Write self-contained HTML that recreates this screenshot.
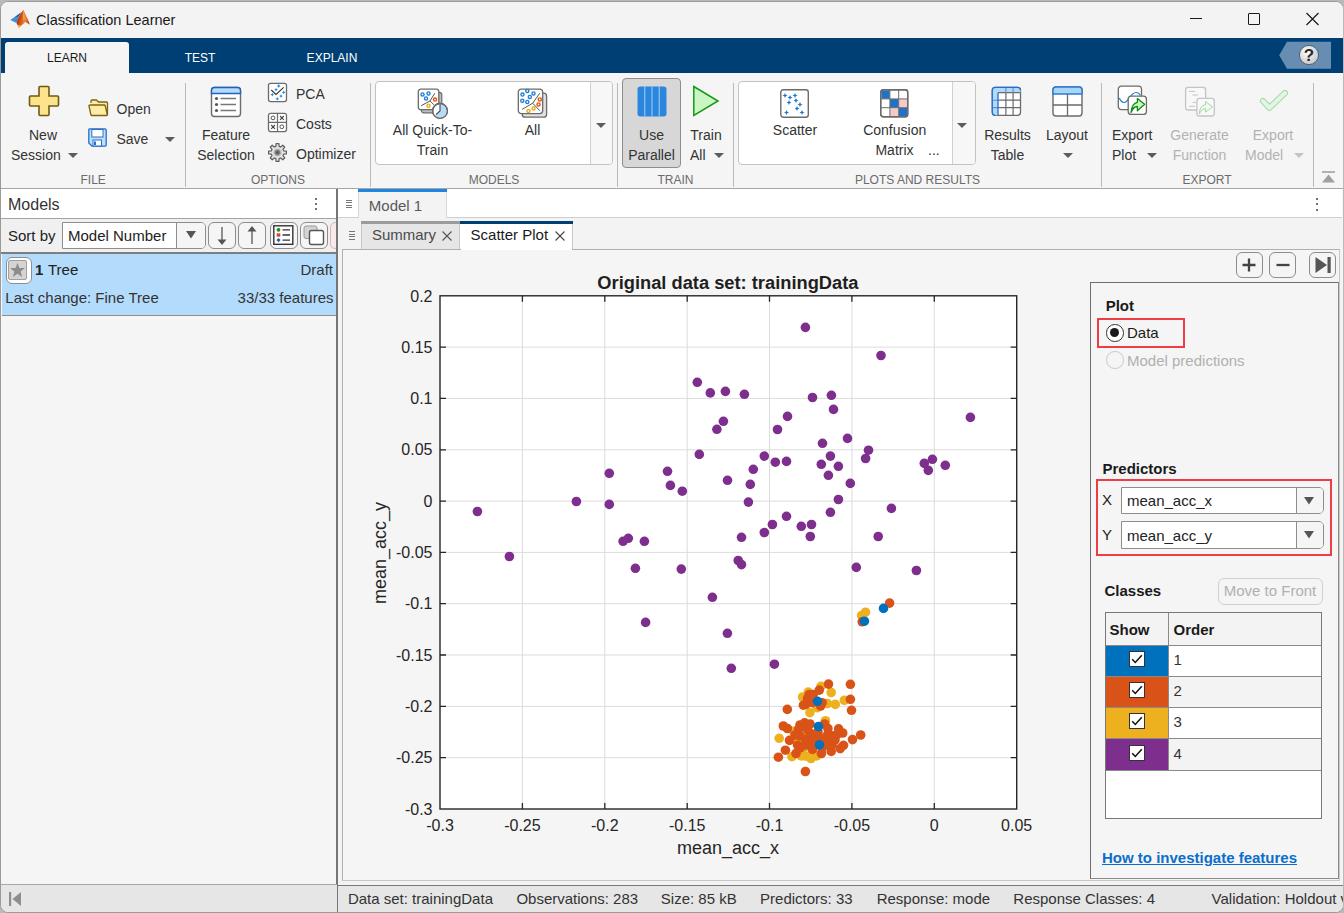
<!DOCTYPE html>
<html><head><meta charset="utf-8"><title>Classification Learner</title>
<style>
*{box-sizing:border-box;margin:0;padding:0}
html,body{width:1344px;height:913px;overflow:hidden}
body{position:relative;font-family:"Liberation Sans",sans-serif;color:#222;background:#7a6a5a}
.a{position:absolute}
.t{position:absolute;white-space:nowrap;line-height:1}
svg{position:absolute;overflow:visible}
</style></head><body>
<div class="a" style="left:0px;top:0px;width:1344px;height:913px;background:#b9b9b9"></div>
<div class="a" style="left:0px;top:1px;width:1344px;height:912px;background:#f5f5f5;border:1px solid #9a9a9a;border-radius:8px"></div>
<div class="a" style="left:1px;top:2px;width:1342px;height:36px;background:#f3f3f3;border-radius:7px 7px 0 0"></div>
<div class="t" style="top:12.7px;font-size:14.5px;left:36.0px;color:#1a1a1a">Classification Learner</div>
<svg style="left:0;top:0" width="40" height="35" viewBox="0 0 40 35">
<defs><linearGradient id="mlo" x1="0" y1="0" x2="1" y2="0.3"><stop offset="0" stop-color="#8c1d12"/><stop offset="0.45" stop-color="#d4521c"/><stop offset="0.75" stop-color="#f08a3a"/><stop offset="1" stop-color="#c8401a"/></linearGradient></defs>
<path d="M10.3 20.1 L16 16 L21 12.5 L17.5 19 L16.5 23.1 Z" fill="#3d8fdc"/>
<path d="M15 17 L21 12.5 L18.5 16.5 Z" fill="#2a5a8a"/>
<path d="M23.4 9.9 L27 17.5 L30 24.7 L25.4 22.1 L18.8 27.7 L16.5 23.1 L17.5 19 L21 13 Z" fill="url(#mlo)"/>
<path d="M23.4 9.9 L24.6 14 L24.8 19 L23.3 21 L22.8 15 Z" fill="#f7b23c" opacity="0.8"/>
<path d="M17.8 25.2 L20.3 24.9 L19.6 27.9 L18.6 27.5 Z" fill="#f5c230"/>
</svg>
<div class="a" style="left:1190px;top:18px;width:12px;height:1px;background:#1a1a1a"></div>
<div class="a" style="left:1248px;top:13px;width:12px;height:12px;border:1px solid #1a1a1a;border-radius:1px"></div>
<svg style="left:1306px;top:13px" width="13" height="12" viewBox="0 0 13 12"><path d="M0.5 0 L12.5 12 M12.5 0 L0.5 12" stroke="#1a1a1a" stroke-width="1.2"/></svg>
<div class="a" style="left:1px;top:38px;width:1342px;height:35px;background:#003f73"></div>
<div class="a" style="left:5px;top:42px;width:124px;height:31px;background:#f5f5f5;border-radius:3px 3px 0 0"></div>
<div class="t" style="top:50.6px;font-size:13.5px;left:7.0px;width:120px;text-align:center;color:#1b1b1b;transform:scaleX(0.89)">LEARN</div>
<div class="t" style="top:50.6px;font-size:13.5px;left:140.0px;width:120px;text-align:center;color:#fff;transform:scaleX(0.89)">TEST</div>
<div class="t" style="top:50.6px;font-size:13.5px;left:272.0px;width:120px;text-align:center;color:#fff;transform:scaleX(0.89)">EXPLAIN</div>
<div class="a" style="left:1px;top:73px;width:1342px;height:115px;background:#f5f5f5"></div>
<div class="a" style="left:1px;top:188px;width:1342px;height:1px;background:#a6a6a6"></div>
<div class="a" style="left:185px;top:83px;width:1.3px;height:104px;background:#b9b9b9"></div>
<div class="a" style="left:370px;top:83px;width:1.3px;height:104px;background:#b9b9b9"></div>
<div class="a" style="left:617px;top:83px;width:1.3px;height:104px;background:#b9b9b9"></div>
<div class="a" style="left:733px;top:83px;width:1.3px;height:104px;background:#b9b9b9"></div>
<div class="a" style="left:1101px;top:83px;width:1.3px;height:104px;background:#b9b9b9"></div>
<div class="a" style="left:1313px;top:83px;width:1.3px;height:104px;background:#b9b9b9"></div>
<div class="t" style="top:174.2px;font-size:12px;left:-6.8px;width:200px;text-align:center;color:#6b6b6b">FILE</div>
<div class="t" style="top:174.2px;font-size:12px;left:178.0px;width:200px;text-align:center;color:#6b6b6b">OPTIONS</div>
<div class="t" style="top:174.2px;font-size:12px;left:394.0px;width:200px;text-align:center;color:#6b6b6b">MODELS</div>
<div class="t" style="top:174.2px;font-size:12px;left:575.5px;width:200px;text-align:center;color:#6b6b6b">TRAIN</div>
<div class="t" style="top:174.2px;font-size:12px;left:817.5px;width:200px;text-align:center;color:#6b6b6b">PLOTS AND RESULTS</div>
<div class="t" style="top:174.2px;font-size:12px;left:1107.0px;width:200px;text-align:center;color:#6b6b6b">EXPORT</div>
<svg style="left:28px;top:85px" width="32" height="32" viewBox="0 0 32 32">
<path d="M12 1.5 H20 Q21 1.5 21 2.5 V11 H29.5 Q30.5 11 30.5 12 V20 Q30.5 21 29.5 21 H21 V29.5 Q21 30.5 20 30.5 H12 Q11 30.5 11 29.5 V21 H2.5 Q1.5 21 1.5 20 V12 Q1.5 11 2.5 11 H11 V2.5 Q11 1.5 12 1.5 Z" fill="#fce48c" stroke="#6e5a12" stroke-width="1.6"/>
</svg>
<div class="t" style="top:127.8px;font-size:14px;left:-7.0px;width:100px;text-align:center;color:#333">New</div>
<div class="t" style="top:147.6px;font-size:14px;left:11.0px;color:#333">Session</div>
<svg style="left:68px;top:153px" width="10" height="5" viewBox="0 0 10 5"><path d="M0 0 L10 0 L5.0 5 Z" fill="#5c5c5c"/></svg>
<svg style="left:88px;top:99px" width="21" height="18" viewBox="0 0 21 18">
<path d="M3 4 V2 Q3 1 4 1 H8.5 L10.5 3 H18.5 Q19.5 3 19.5 4 V15.5 Q19.5 16.5 18.5 16.5 H4 Q3 16.5 2.8 15.5 L1 7 Q0.8 6 2 6 H16 Q17 6 17.3 7 L19.3 16" fill="#fdeba6" stroke="#7a6414" stroke-width="1.3" stroke-linejoin="round"/>
</svg>
<div class="t" style="top:102.1px;font-size:14px;left:116.5px;color:#333">Open</div>
<svg style="left:88px;top:128px" width="19" height="19" viewBox="0 0 19 19">
<path d="M1.5 0.8 H17 Q18.2 0.8 18.2 2 V17 Q18.2 18.2 17 18.2 H4 L0.8 15 V2 Q0.8 0.8 1.5 0.8 Z" fill="#bfe0fb" stroke="#2a6fc4" stroke-width="1.3"/>
<rect x="3.8" y="1.5" width="11.2" height="7.5" fill="#fff" stroke="#2a6fc4" stroke-width="1"/>
<rect x="5" y="12" width="8.5" height="6" fill="#fff" stroke="#2a6fc4" stroke-width="1"/>
<rect x="6" y="13.5" width="2" height="3.5" fill="#2a6fc4"/>
</svg>
<div class="t" style="top:131.9px;font-size:14px;left:116.5px;color:#333">Save</div>
<svg style="left:165px;top:137px" width="10" height="5" viewBox="0 0 10 5"><path d="M0 0 L10 0 L5.0 5 Z" fill="#5c5c5c"/></svg>
<svg style="left:210px;top:86px" width="32" height="32" viewBox="0 0 32 32">
<rect x="1.5" y="1.5" width="29" height="29" rx="3" fill="#fff" stroke="#6b6b6b" stroke-width="1.4"/>
<path d="M1.5 7.5 V4.5 Q1.5 1.5 4.5 1.5 H27.5 Q30.5 1.5 30.5 4.5 V7.5 Z" fill="#b3dcfc" stroke="#2262b8" stroke-width="1.4"/>
<circle cx="6.5" cy="12.5" r="1.6" fill="#555"/><circle cx="6.5" cy="18.5" r="1.6" fill="#555"/><circle cx="6.5" cy="24.5" r="1.6" fill="#555"/>
<path d="M10.5 12.5 H26 M10.5 18.5 H26 M10.5 24.5 H26" stroke="#777" stroke-width="1.4"/>
</svg>
<div class="t" style="top:128.1px;font-size:14px;left:176.0px;width:100px;text-align:center;color:#333">Feature</div>
<div class="t" style="top:147.9px;font-size:14px;left:176.0px;width:100px;text-align:center;color:#333">Selection</div>
<svg style="left:265px;top:80px" width="25" height="25" viewBox="265 80 25 25">
<rect x="268.5" y="83.3" width="18" height="18.3" rx="2" fill="#fff" stroke="#6b6b6b" stroke-width="1.3"/>
<g fill="#2c8ae0"><path d="M278.7 84.1 L279.365 85.335 L280.59999999999997 86 L279.365 86.665 L278.7 87.9 L278.03499999999997 86.665 L276.8 86 L278.03499999999997 85.335 Z"/><path d="M276 87.8 L276.665 89.035 L277.9 89.7 L276.665 90.36500000000001 L276 91.60000000000001 L275.335 90.36500000000001 L274.1 89.7 L275.335 89.035 Z"/><path d="M283.7 90.5 L284.365 91.735 L285.59999999999997 92.4 L284.365 93.06500000000001 L283.7 94.30000000000001 L283.03499999999997 93.06500000000001 L281.8 92.4 L283.03499999999997 91.735 Z"/><path d="M272.3 92.8 L272.96500000000003 94.035 L274.2 94.7 L272.96500000000003 95.36500000000001 L272.3 96.60000000000001 L271.635 95.36500000000001 L270.40000000000003 94.7 L271.635 94.035 Z"/><path d="M281 94.19999999999999 L281.665 95.43499999999999 L282.9 96.1 L281.665 96.765 L281 98.0 L280.335 96.765 L279.1 96.1 L280.335 95.43499999999999 Z"/><path d="M277.3 96.89999999999999 L277.96500000000003 98.13499999999999 L279.2 98.8 L277.96500000000003 99.465 L277.3 100.7 L276.635 99.465 L275.40000000000003 98.8 L276.635 98.13499999999999 Z"/></g>
<path d="M271.3 90 L276 94.4 L283.7 87.4" fill="none" stroke="#333" stroke-width="1.1"/>
</svg>
<div class="t" style="top:87.1px;font-size:14px;left:296.0px;color:#333">PCA</div>
<svg style="left:267px;top:112px" width="21" height="21" viewBox="0 0 21 21">
<rect x="1.5" y="1.3" width="18" height="18.3" rx="2" fill="#fff" stroke="#6b6b6b" stroke-width="1.3"/>
<path d="M10.5 1.3 V19.6 M1.5 10.4 H19.5" stroke="#6b6b6b" stroke-width="1.2"/>
<circle cx="6" cy="5.9" r="1.9" fill="none" stroke="#555" stroke-width="1"/><circle cx="14.8" cy="14.8" r="1.9" fill="none" stroke="#555" stroke-width="1"/>
<path d="M13 4 L16.8 7.8 M16.8 4 L13 7.8 M4.2 13 L8 16.8 M8 13 L4.2 16.8" stroke="#444" stroke-width="1.1"/>
</svg>
<div class="t" style="top:116.8px;font-size:14px;left:296.0px;color:#333">Costs</div>
<svg style="left:267px;top:142px" width="21" height="21" viewBox="0 0 21 21">
<defs><radialGradient id="gg"><stop offset="0" stop-color="#505050"/><stop offset="0.4" stop-color="#707070"/><stop offset="0.7" stop-color="#a8a8a8"/><stop offset="1" stop-color="#d8d8d8"/></radialGradient></defs>
<path d="M8.87 4.41 L9.09 1.61 L11.91 1.61 L12.13 4.41 L13.65 5.04 L15.79 3.22 L17.78 5.21 L15.96 7.35 L16.59 8.87 L19.39 9.09 L19.39 11.91 L16.59 12.13 L15.96 13.65 L17.78 15.79 L15.79 17.78 L13.65 15.96 L12.13 16.59 L11.91 19.39 L9.09 19.39 L8.87 16.59 L7.35 15.96 L5.21 17.78 L3.22 15.79 L5.04 13.65 L4.41 12.13 L1.61 11.91 L1.61 9.09 L4.41 8.87 L5.04 7.35 L3.22 5.21 L5.21 3.22 L7.35 5.04 Z" fill="#e4e4e4" stroke="#5e5e5e" stroke-width="1.2" stroke-linejoin="round"/><circle cx="10.5" cy="10.5" r="4.3" fill="url(#gg)"/>
</svg>
<div class="t" style="top:146.5px;font-size:14px;left:296.0px;color:#333">Optimizer</div>
<div class="a" style="left:375px;top:81px;width:238px;height:84px;background:#fff;border:1px solid #c3c3c3;border-radius:4px"></div>
<div class="a" style="left:590px;top:82px;width:22px;height:82px;background:#f7f7f7;border-left:1px solid #d0d0d0;border-radius:0 3px 3px 0"></div>
<svg style="left:596px;top:123px" width="10" height="5" viewBox="0 0 10 5"><path d="M0 0 L10 0 L5.0 5 Z" fill="#5c5c5c"/></svg>
<svg style="left:417px;top:88px" width="34" height="34" viewBox="0 0 34 34"><rect x="4.3" y="4.3" width="20.5" height="20.5" rx="2.5" fill="#bdbdbd" stroke="#6b6b6b" stroke-width="1.2"/><rect x="1.3" y="1.2" width="20.5" height="20.5" rx="2.5" fill="#fff" stroke="#6b6b6b" stroke-width="1.3"/><path d="M4.2 17.7 L13 12.9 L17.8 5.2 M13 12.9 L17.2 17" fill="none" stroke="#444" stroke-width="0.9"/><circle cx="5.5" cy="6.4" r="1.55" fill="#fff" stroke="#1f7fd6" stroke-width="1.4"/><circle cx="11.5" cy="5.4" r="1.55" fill="#fff" stroke="#1f7fd6" stroke-width="1.4"/><circle cx="9" cy="10.4" r="1.55" fill="#fff" stroke="#1f7fd6" stroke-width="1.4"/><circle cx="18" cy="11.6" r="1.55" fill="#fff" stroke="#e0540f" stroke-width="1.4"/><circle cx="11.5" cy="17.7" r="1.55" fill="#fff" stroke="#eeaa10" stroke-width="1.4"/><circle cx="23" cy="22.9" r="7.4" fill="#fff" stroke="#6b6b6b" stroke-width="1.3"/><path d="M23 22.9 V16.3 A6.6 6.6 0 1 1 18.3 27.6 Z" fill="#b5dcfb"/><path d="M23 16.3 V22.9 L19 26.6" fill="none" stroke="#444" stroke-width="1.1"/><circle cx="23" cy="22.9" r="7.4" fill="none" stroke="#6b6b6b" stroke-width="1.3"/></svg>
<svg style="left:517px;top:88px" width="32" height="32" viewBox="0 0 32 32"><rect x="5.2" y="5.2" width="24.4" height="24" rx="3" fill="#e2e2e2" stroke="#6b6b6b" stroke-width="1.3"/><rect x="1.3" y="1.2" width="24.4" height="24.4" rx="3" fill="#fff" stroke="#6b6b6b" stroke-width="1.3"/><path d="M5 21.4 L15.7 15.2 L22.8 5.2 M15.7 15.2 L22.8 22.7" fill="none" stroke="#444" stroke-width="0.9"/><circle cx="5.5" cy="6.6" r="1.55" fill="#fff" stroke="#1f7fd6" stroke-width="1.4"/><circle cx="10.3" cy="2.9" r="1.55" fill="#fff" stroke="#1f7fd6" stroke-width="1.4"/><circle cx="16.5" cy="5.4" r="1.55" fill="#fff" stroke="#1f7fd6" stroke-width="1.4"/><circle cx="12.8" cy="8.9" r="1.55" fill="#fff" stroke="#1f7fd6" stroke-width="1.4"/><circle cx="5.3" cy="12.7" r="1.55" fill="#fff" stroke="#1f7fd6" stroke-width="1.4"/><circle cx="10.3" cy="13.9" r="1.55" fill="#fff" stroke="#1f7fd6" stroke-width="1.4"/><circle cx="22.8" cy="11.4" r="1.55" fill="#fff" stroke="#e0540f" stroke-width="1.4"/><circle cx="21.5" cy="16.4" r="1.55" fill="#fff" stroke="#e0540f" stroke-width="1.4"/><circle cx="16.5" cy="20.4" r="1.55" fill="#fff" stroke="#eeaa10" stroke-width="1.4"/><circle cx="11.5" cy="22.9" r="1.55" fill="#fff" stroke="#eeaa10" stroke-width="1.4"/></svg>
<div class="t" style="top:123.1px;font-size:14px;left:372.5px;width:120px;text-align:center;color:#333">All Quick-To-</div>
<div class="t" style="top:142.7px;font-size:14px;left:382.5px;width:100px;text-align:center;color:#333">Train</div>
<div class="t" style="top:123.1px;font-size:14px;left:482.5px;width:100px;text-align:center;color:#333">All</div>
<div class="a" style="left:622px;top:78px;width:59px;height:90px;background:#d7d7d7;border:1px solid #8e8e8e;border-radius:4px"></div>
<svg style="left:637px;top:86px" width="30" height="31" viewBox="0 0 30 31">
<rect x="0.5" y="0.5" width="29" height="30" rx="3" fill="#2b87dd"/>
<path d="M7.8 0.5 V30.5 M15 0.5 V30.5 M22.2 0.5 V30.5" stroke="#a9cff2" stroke-width="1"/>
</svg>
<div class="t" style="top:128.1px;font-size:14px;left:601.5px;width:100px;text-align:center;color:#333">Use</div>
<div class="t" style="top:147.9px;font-size:14px;left:601.5px;width:100px;text-align:center;color:#333">Parallel</div>
<svg style="left:692px;top:85px" width="28" height="32" viewBox="0 0 28 32">
<path d="M1.8 1.5 L26 16 L1.8 30.5 Z" fill="#c9f6c3" stroke="#159a15" stroke-width="1.5" stroke-linejoin="miter"/>
</svg>
<div class="t" style="top:128.1px;font-size:14px;left:656.0px;width:100px;text-align:center;color:#333">Train</div>
<div class="t" style="top:147.9px;font-size:14px;left:690.0px;color:#333">All</div>
<svg style="left:714px;top:153px" width="10" height="5" viewBox="0 0 10 5"><path d="M0 0 L10 0 L5.0 5 Z" fill="#5c5c5c"/></svg>
<div class="a" style="left:738px;top:81px;width:238px;height:84px;background:#fff;border:1px solid #c3c3c3;border-radius:4px"></div>
<div class="a" style="left:952px;top:82px;width:23px;height:82px;background:#f7f7f7;border-left:1px solid #d0d0d0;border-radius:0 3px 3px 0"></div>
<svg style="left:957px;top:123px" width="10" height="5" viewBox="0 0 10 5"><path d="M0 0 L10 0 L5.0 5 Z" fill="#5c5c5c"/></svg>
<svg style="left:780px;top:89px" width="30" height="30" viewBox="0 0 30 30">
<rect x="0.8" y="0.8" width="27.5" height="27.5" rx="2.5" fill="#fff" stroke="#6b6b6b" stroke-width="1.4"/>
<g fill="#1e78d0">
<path d="M5 5 l0.8 1.7 l1.7 0.8 l-1.7 0.8 l-0.8 1.7 l-0.8 -1.7 l-1.7 -0.8 l1.7 -0.8z" transform="translate(0 -1)"/>
<path d="M5 5 l0.8 1.7 l1.7 0.8 l-1.7 0.8 l-0.8 1.7 l-0.8 -1.7 l-1.7 -0.8 l1.7 -0.8z" transform="translate(5 1)"/>
<path d="M5 5 l0.8 1.7 l1.7 0.8 l-1.7 0.8 l-0.8 1.7 l-0.8 -1.7 l-1.7 -0.8 l1.7 -0.8z" transform="translate(10 -1)"/>
<path d="M5 5 l0.8 1.7 l1.7 0.8 l-1.7 0.8 l-0.8 1.7 l-0.8 -1.7 l-1.7 -0.8 l1.7 -0.8z" transform="translate(11 4)"/>
<path d="M5 5 l0.8 1.7 l1.7 0.8 l-1.7 0.8 l-0.8 1.7 l-0.8 -1.7 l-1.7 -0.8 l1.7 -0.8z" transform="translate(4 6)"/>
<path d="M5 5 l0.8 1.7 l1.7 0.8 l-1.7 0.8 l-0.8 1.7 l-0.8 -1.7 l-1.7 -0.8 l1.7 -0.8z" transform="translate(15 8)"/>
<path d="M5 5 l0.8 1.7 l1.7 0.8 l-1.7 0.8 l-0.8 1.7 l-0.8 -1.7 l-1.7 -0.8 l1.7 -0.8z" transform="translate(12 12)"/>
<path d="M5 5 l0.8 1.7 l1.7 0.8 l-1.7 0.8 l-0.8 1.7 l-0.8 -1.7 l-1.7 -0.8 l1.7 -0.8z" transform="translate(1.5 16)"/>
<path d="M5 5 l0.8 1.7 l1.7 0.8 l-1.7 0.8 l-0.8 1.7 l-0.8 -1.7 l-1.7 -0.8 l1.7 -0.8z" transform="translate(17 16)"/>
</g></svg>
<div class="t" style="top:123.1px;font-size:14px;left:745.0px;width:100px;text-align:center;color:#333">Scatter</div>
<svg style="left:880px;top:89px" width="29" height="29" viewBox="0 0 29 29">
<rect x="0.7" y="0.7" width="27" height="27" rx="2.5" fill="#fff" stroke="#6b6b6b" stroke-width="1.4"/>
<rect x="1.4" y="1.4" width="8.4" height="8.4" fill="#1f72c7"/>
<rect x="10" y="10" width="8.6" height="8.6" fill="#1f72c7"/>
<rect x="18.8" y="18.8" width="8.3" height="8.3" fill="#1f72c7"/>
<rect x="18.8" y="10" width="8.3" height="8.6" fill="#f7caca"/>
<rect x="10" y="18.8" width="8.6" height="8.3" fill="#f7caca"/>
<path d="M9.9 0.7 V27.7 M18.7 0.7 V27.7 M0.7 9.9 H27.7 M0.7 18.7 H27.7" stroke="#6b6b6b" stroke-width="1"/>
<rect x="0.7" y="0.7" width="27" height="27" rx="2.5" fill="none" stroke="#6b6b6b" stroke-width="1.4"/>
</svg>
<div class="t" style="top:123.1px;font-size:14px;left:844.7px;width:100px;text-align:center;color:#333">Confusion</div>
<div class="t" style="top:142.7px;font-size:14px;left:844.5px;width:100px;text-align:center;color:#333">Matrix</div>
<div class="t" style="top:142.7px;font-size:14px;left:928.0px;color:#333">...</div>
<svg style="left:988px;top:83px" width="36" height="36" viewBox="988 83 36 36">
<rect x="992.3" y="87.3" width="28.2" height="28" rx="3" fill="#fff" stroke="#6b6b6b" stroke-width="1.3"/>
<path d="M992.3 92.7 V90.3 Q992.3 87.3 995.3 87.3 H1017.5 Q1020.5 87.3 1020.5 90.3 V92.7 H998 V115.3 H995.3 Q992.3 115.3 992.3 112.3 Z" fill="#b0d9fb"/>
<path d="M1005.9 92.7 V115.3 M1013.1 92.7 V115.3 M998 92.7 H1020.5 M998 100.2 H1020.5 M998 107.6 H1020.5" stroke="#6b6b6b" stroke-width="1.2"/>
<path d="M1005.9 87.3 V92.7 M1013.1 87.3 V92.7 M992.3 100.2 H998 M992.3 107.6 H998" stroke="#5a8fd6" stroke-width="1.1"/>
<path d="M998 115.3 V92.7 M995.3 115.3 Q992.3 115.3 992.3 112.3 V90.3 Q992.3 87.3 995.3 87.3 H1017.5 Q1020.5 87.3 1020.5 90.3" fill="none" stroke="#2a6fc8" stroke-width="1.3"/>
</svg>
<div class="t" style="top:128.1px;font-size:14px;left:957.5px;width:100px;text-align:center;color:#333">Results</div>
<div class="t" style="top:147.9px;font-size:14px;left:957.5px;width:100px;text-align:center;color:#333">Table</div>
<svg style="left:1052px;top:86px" width="31" height="31" viewBox="0 0 31 31">
<rect x="1" y="1" width="29" height="29" rx="3" fill="#fff" stroke="#6b6b6b" stroke-width="1.4"/>
<path d="M1 8 V4 Q1 1 4 1 H27 Q30 1 30 4 V8 Z" fill="#a9d5f8" stroke="#2b7bd1" stroke-width="1.4"/>
<path d="M15.5 8 V30 M1 19 H30" stroke="#6b6b6b" stroke-width="1.3"/>
</svg>
<div class="t" style="top:128.1px;font-size:14px;left:1017.0px;width:100px;text-align:center;color:#333">Layout</div>
<svg style="left:1063px;top:153px" width="10" height="5" viewBox="0 0 10 5"><path d="M0 0 L10 0 L5.0 5 Z" fill="#5c5c5c"/></svg>
<svg style="left:1117px;top:85px" width="32" height="31" viewBox="0 0 32 31">
<rect x="1.3" y="1.1" width="23.2" height="23.5" rx="3" fill="#fff" stroke="#6b6b6b" stroke-width="1.3"/>
<path d="M2.2 13 C4 17 6 17.8 8 17.4 C11 16.5 14 7.5 18.9 7.5 C21 7.5 22.5 9 23.2 10.3" fill="none" stroke="#1f7fd6" stroke-width="1.2"/>
<rect x="11.2" y="11.2" width="18.2" height="18.2" rx="3" fill="#fff" stroke="#6b6b6b" stroke-width="1.3"/>
<path d="M14 27.5 C14.5 22 16.5 18 20.4 17.3 V13.6 L27.6 19.3 L20.4 25.7 V21.5 C17.5 21.5 15.5 23.5 14 27.5 Z" fill="#c8f7c0" stroke="#0f8a0f" stroke-width="1.3" stroke-linejoin="round"/>
</svg>
<div class="t" style="top:128.1px;font-size:14px;left:1112.0px;color:#333">Export</div>
<div class="t" style="top:148.1px;font-size:14px;left:1112.0px;color:#333">Plot</div>
<svg style="left:1147px;top:153px" width="10" height="5" viewBox="0 0 10 5"><path d="M0 0 L10 0 L5.0 5 Z" fill="#5c5c5c"/></svg>
<svg style="left:1175px;top:80px" width="45" height="40" viewBox="1175 80 45 40">
<rect x="1185.6" y="87.4" width="20" height="22.6" rx="2.5" fill="#f8f8f8" stroke="#c4c4c4" stroke-width="1.3"/>
<path d="M1189 91.4 H1195 M1192.5 95 H1198 M1192.5 102.4 H1196 M1189 106.3 H1195" stroke="#c4c4c4" stroke-width="1"/>
<rect x="1196.9" y="98.4" width="17.4" height="17.6" rx="2.5" fill="#f8f8f8" stroke="#c4c4c4" stroke-width="1.3"/>
<path d="M1199.3 114 C1199.5 108.5 1201.5 105.5 1205.5 104.8 V101.5 L1212.5 106.8 L1205.5 112.2 V108.7 C1202.5 108.7 1200.5 111 1199.3 114 Z" fill="#eefaee" stroke="#a6d8a6" stroke-width="1" stroke-linejoin="round"/>
</svg>
<div class="t" style="top:128.1px;font-size:14px;left:1149.5px;width:100px;text-align:center;color:#b2b2b2">Generate</div>
<div class="t" style="top:147.9px;font-size:14px;left:1149.5px;width:100px;text-align:center;color:#b2b2b2">Function</div>
<svg style="left:1255px;top:85px" width="36" height="30" viewBox="1255 85 36 30">
<path d="M1263 101 L1269.4 107.8 L1285 93" fill="none" stroke="#a8daa8" stroke-width="6.2" stroke-linecap="round" stroke-linejoin="round"/>
<path d="M1263 101 L1269.4 107.8 L1285 93" fill="none" stroke="#e3f6e3" stroke-width="4" stroke-linecap="round" stroke-linejoin="round"/>
</svg>
<div class="t" style="top:128.1px;font-size:14px;left:1223.0px;width:100px;text-align:center;color:#b2b2b2">Export</div>
<div class="t" style="top:147.9px;font-size:14px;left:1245.0px;color:#b2b2b2">Model</div>
<svg style="left:1294px;top:153px" width="10" height="5" viewBox="0 0 10 5"><path d="M0 0 L10 0 L5.0 5 Z" fill="#c4c4c4"/></svg>
<svg style="left:1321px;top:171px" width="15" height="13" viewBox="0 0 15 13">
<path d="M1 1 H14" stroke="#a0a0a0" stroke-width="1.6"/><path d="M7.5 3.5 L14 11.5 H1 Z" fill="#a0a0a0"/>
</svg>
<svg style="left:1279px;top:41px" width="53" height="28" viewBox="0 0 53 28">
<path d="M8 0.8 H52 V27.8 H8 L0.2 14.3 Z" fill="#678db3"/>
<defs><radialGradient id="hg" cx="40%" cy="35%" r="65%"><stop offset="0" stop-color="#ffffff"/><stop offset="1" stop-color="#c9c9c9"/></radialGradient></defs>
<circle cx="30" cy="14" r="9.6" fill="url(#hg)" stroke="#4a5a6a" stroke-width="0.9"/>
<text x="30" y="20" text-anchor="middle" font-family="Liberation Sans" font-weight="bold" font-size="17" fill="#2a2a2a">?</text>
</svg>
<div class="a" style="left:1px;top:189px;width:336px;height:696px;background:#f5f5f5"></div>
<div class="a" style="left:1px;top:189px;width:336px;height:29px;background:#fff"></div>
<div class="t" style="top:196.6px;font-size:16px;left:8.0px;color:#333">Models</div>
<div class="a" style="left:314.5px;top:197.5px;width:2.4px;height:2.4px;background:#444;border-radius:50%"></div>
<div class="a" style="left:314.5px;top:202.5px;width:2.4px;height:2.4px;background:#444;border-radius:50%"></div>
<div class="a" style="left:314.5px;top:207.5px;width:2.4px;height:2.4px;background:#444;border-radius:50%"></div>
<div class="a" style="left:1px;top:217.5px;width:336px;height:1.5px;background:#a3a3a3"></div>
<div class="a" style="left:1px;top:219px;width:336px;height:33px;background:#f0f0f0"></div>
<div class="a" style="left:1px;top:252px;width:336px;height:1.8px;background:#7e7e7e"></div>
<div class="t" style="top:227.6px;font-size:15px;left:8.0px;color:#222">Sort by</div>
<div class="a" style="left:62px;top:222px;width:144px;height:27px;background:#fff;border:1px solid #8d8d8d;border-radius:0 5px 5px 0"></div>
<div class="a" style="left:176px;top:223px;width:29px;height:25px;background:#f5f5f5;border-left:1px solid #8d8d8d;border-radius:0 4px 4px 0"></div>
<svg style="left:186px;top:231px" width="10" height="7.5" viewBox="0 0 10 7.5"><path d="M0 0 L10 0 L5.0 7.5 Z" fill="#555"/></svg>
<div class="t" style="top:227.8px;font-size:15px;left:68.0px;color:#222">Model Number</div>
<div class="a" style="left:208px;top:222px;width:27.5px;height:27px;background:#f5f5f5;border:1px solid #8d8d8d;border-radius:6px"></div>
<div class="a" style="left:238px;top:222px;width:27.5px;height:27px;background:#f5f5f5;border:1px solid #8d8d8d;border-radius:6px"></div>
<div class="a" style="left:270px;top:222px;width:27.5px;height:27px;background:#f5f5f5;border:1px solid #8d8d8d;border-radius:6px"></div>
<div class="a" style="left:300px;top:222px;width:27.5px;height:27px;background:#f5f5f5;border:1px solid #8d8d8d;border-radius:6px"></div>
<div class="a" style="left:330px;top:222px;width:10px;height:27px;background:#f7eaea;border:1px solid #d8b8b8;border-radius:6px"></div>
<svg style="left:214px;top:226px" width="16" height="20" viewBox="0 0 16 20"><path d="M8 1 V16" stroke="#555" stroke-width="1.3"/><path d="M3.5 13.5 L8 19 L12.5 13.5 Z" fill="#555"/></svg>
<svg style="left:244px;top:225px" width="16" height="20" viewBox="0 0 16 20"><path d="M8 4 V19" stroke="#555" stroke-width="1.3"/><path d="M3.5 6.5 L8 1 L12.5 6.5 Z" fill="#555"/></svg>
<svg style="left:273px;top:225px" width="21" height="20" viewBox="0 0 21 20">
<rect x="0.8" y="0.8" width="19" height="18.5" fill="#fff" stroke="#333" stroke-width="1.4"/>
<circle cx="5.5" cy="4.8" r="1.9" fill="#1f8a1f"/><rect x="3.7" y="8.3" width="3.6" height="3.4" fill="#d24a2a"/><path d="M5.5 13 L7.6 15.1 L5.5 17.2 L3.4 15.1 Z" fill="#1f5fbf"/>
<path d="M9.5 4.8 H17 M9.5 10 H17 M9.5 15.1 H17" stroke="#333" stroke-width="1.3"/>
</svg>
<svg style="left:303px;top:225px" width="22" height="21" viewBox="0 0 22 21">
<rect x="1" y="1" width="13" height="12.5" rx="2" fill="#d4d4d4" stroke="#9a9a9a" stroke-width="1"/>
<rect x="6.5" y="5.5" width="14" height="14" rx="2" fill="#fff" stroke="#555" stroke-width="1.4"/>
</svg>
<div class="a" style="left:336px;top:189px;width:2px;height:723px;background:#767676"></div>
<div class="a" style="left:1.5px;top:253.8px;width:334.5px;height:61px;background:#b3dcfc"></div>
<div class="a" style="left:1.5px;top:314.8px;width:334.5px;height:1px;background:#8f8f8f"></div>
<div class="a" style="left:5.5px;top:257.3px;width:26px;height:26.5px;background:#fff;border:1px solid #8d8d8d;border-radius:6px"></div>
<div class="a" style="left:8.3px;top:260px;width:18.7px;height:19.5px;background:#d4d4d4;border:1px solid #a0a0a0;border-radius:2px"></div>
<svg style="left:9px;top:262px" width="17" height="16" viewBox="0 0 17 16"><path d="M8.5 0.8 L10.4 6 L16 6.1 L11.6 9.5 L13.2 15 L8.5 11.8 L3.8 15 L5.4 9.5 L1 6.1 L6.6 6 Z" fill="#8c8c8c"/></svg>
<div class="t" style="top:262.0px;font-size:15px;font-weight:bold;left:35.0px;color:#222">1</div>
<div class="t" style="top:262.0px;font-size:15px;left:48.0px;color:#222">Tree</div>
<div class="t" style="top:262.0px;font-size:15px;left:233.0px;width:100px;text-align:right;color:#333">Draft</div>
<div class="t" style="top:290.0px;font-size:15px;left:5.3px;color:#333">Last change: Fine Tree</div>
<div class="t" style="top:290.0px;font-size:15px;left:183.5px;width:150px;text-align:right;color:#333">33/33 features</div>
<div class="a" style="left:1px;top:885px;width:336px;height:27px;background:#e6e6e6;border-radius:0 0 0 8px"></div>
<div class="a" style="left:1px;top:884px;width:336px;height:1px;background:#a8a8a8"></div>
<svg style="left:9px;top:891px" width="13" height="16" viewBox="0 0 13 16"><rect x="0" y="1" width="2.2" height="14" fill="#8e8e8e"/><path d="M12 1 V15 L3.5 8 Z" fill="#8e8e8e"/></svg>
<div class="a" style="left:338px;top:188.5px;width:1004px;height:29px;background:#fff"></div>
<div class="a" style="left:338px;top:217px;width:1004px;height:1px;background:#cfcfcf"></div>
<div class="a" style="left:357.5px;top:189px;width:89px;height:29px;background:#f3f3f3;border-left:1px solid #d6d6d6;border-right:1px solid #d6d6d6"></div>
<div class="a" style="left:357.5px;top:189px;width:89px;height:3px;background:#1f86e0"></div>
<div class="a" style="left:346px;top:199.5px;width:6px;height:1.1px;background:#777"></div>
<div class="a" style="left:346px;top:202px;width:6px;height:1.1px;background:#777"></div>
<div class="a" style="left:346px;top:204.5px;width:6px;height:1.1px;background:#777"></div>
<div class="a" style="left:346px;top:207px;width:6px;height:1.1px;background:#777"></div>
<div class="t" style="top:198.2px;font-size:15px;left:368.8px;color:#5a5a5a">Model 1</div>
<div class="a" style="left:1316px;top:197.5px;width:2.4px;height:2.4px;background:#444;border-radius:50%"></div>
<div class="a" style="left:1316px;top:203px;width:2.4px;height:2.4px;background:#444;border-radius:50%"></div>
<div class="a" style="left:1316px;top:208.5px;width:2.4px;height:2.4px;background:#444;border-radius:50%"></div>
<div class="a" style="left:338px;top:218px;width:1004px;height:667px;background:#f3f3f3"></div>
<div class="a" style="left:349px;top:231px;width:6px;height:1.1px;background:#777"></div>
<div class="a" style="left:349px;top:233.5px;width:6px;height:1.1px;background:#777"></div>
<div class="a" style="left:349px;top:236px;width:6px;height:1.1px;background:#777"></div>
<div class="a" style="left:349px;top:238.5px;width:6px;height:1.1px;background:#777"></div>
<div class="a" style="left:360.5px;top:221px;width:99px;height:28.5px;background:#e6e6e6;border:1px solid #c8c8c8;border-top:none"></div>
<div class="a" style="left:360.5px;top:221px;width:99px;height:3px;background:#9b9b9b"></div>
<div class="t" style="top:226.7px;font-size:15px;left:371.9px;color:#4a4a4a">Summary</div>
<svg style="left:441.5px;top:230.5px" width="10" height="10" viewBox="0 0 10 10"><path d="M0.5 0.5 L9.5 9.5 M9.5 0.5 L0.5 9.5" stroke="#555" stroke-width="1.1"/></svg>
<div class="a" style="left:459.5px;top:221px;width:113px;height:29px;background:#fff;border-right:1px solid #c8c8c8"></div>
<div class="a" style="left:459.5px;top:221px;width:113px;height:3px;background:#003f73"></div>
<div class="t" style="top:227.0px;font-size:15px;left:470.6px;color:#1a1a1a">Scatter Plot</div>
<svg style="left:554.5px;top:230.5px" width="10" height="10" viewBox="0 0 10 10"><path d="M0.5 0.5 L9.5 9.5 M9.5 0.5 L0.5 9.5" stroke="#444" stroke-width="1.1"/></svg>
<div class="a" style="left:342px;top:248.5px;width:998px;height:632px;background:#f5f5f5;border:1px solid #b0b0b0;border-bottom-color:#c8c8c8;border-right-color:#c8c8c8"></div>
<div class="a" style="left:460.5px;top:248px;width:111px;height:2px;background:#fff"></div>
<div class="a" style="left:1235.5px;top:252.3px;width:27px;height:26px;background:#f5f5f5;border:1px solid #8d8d8d;border-radius:6px"></div>
<div class="a" style="left:1269px;top:252.3px;width:27px;height:26px;background:#f5f5f5;border:1px solid #8d8d8d;border-radius:6px"></div>
<div class="a" style="left:1309px;top:252.3px;width:26.5px;height:26px;background:#f5f5f5;border:1px solid #8d8d8d;border-radius:6px"></div>
<svg style="left:1241px;top:257px" width="16" height="16" viewBox="0 0 16 16"><path d="M8 1.5 V14.5 M1.5 8 H14.5" stroke="#444" stroke-width="2.3"/></svg>
<svg style="left:1274.5px;top:257px" width="16" height="16" viewBox="0 0 16 16"><path d="M1.5 8 H14.5" stroke="#444" stroke-width="2.3"/></svg>
<svg style="left:1312px;top:255px" width="21" height="20" viewBox="0 0 21 20"><path d="M3.5 2 L15 10 L3.5 18 Z" fill="#555"/><rect x="15.5" y="2" width="3.2" height="16" fill="#555"/></svg>
<div class="a" style="left:1089.5px;top:282px;width:249.5px;height:597px;border:1px solid #6f6f6f;border-right-color:#8a8a8a;border-bottom-color:#8a8a8a"></div>
<div class="t" style="top:298.3px;font-size:15px;font-weight:bold;left:1105.7px;color:#1a1a1a">Plot</div>
<div class="a" style="left:1096.5px;top:318px;width:88px;height:30px;border:2.5px solid #ef3d46"></div>
<div class="a" style="left:1106px;top:324px;width:17.5px;height:17.5px;background:#fff;border:1.3px solid #333;border-radius:50%"></div>
<div class="a" style="left:1110.3px;top:328.3px;width:9px;height:9px;background:#1a1a1a;border-radius:50%"></div>
<div class="t" style="top:324.6px;font-size:15px;left:1127.0px;color:#1a1a1a">Data</div>
<div class="a" style="left:1106px;top:351px;width:17.5px;height:17.5px;background:#f5f5f5;border:1.2px solid #c8c8c8;border-radius:50%"></div>
<div class="t" style="top:352.8px;font-size:15px;left:1127.0px;color:#b0b0b0">Model predictions</div>
<div class="t" style="top:461.3px;font-size:15px;font-weight:bold;left:1102.5px;color:#1a1a1a">Predictors</div>
<div class="a" style="left:1096px;top:479px;width:235.5px;height:77px;border:2.5px solid #ef3d46"></div>
<div class="t" style="top:492.3px;font-size:15px;left:1102.0px;color:#222">X</div>
<div class="t" style="top:526.8px;font-size:15px;left:1102.0px;color:#222">Y</div>
<div class="a" style="left:1121px;top:486.5px;width:202.5px;height:27.5px;background:#fff;border:1px solid #8d8d8d;border-radius:0 5px 5px 0"></div>
<div class="a" style="left:1296px;top:487.5px;width:26.5px;height:25.5px;background:#f5f5f5;border-left:1px solid #8d8d8d;border-radius:0 4px 4px 0"></div>
<svg style="left:1304px;top:496.5px" width="10" height="7.5" viewBox="0 0 10 7.5"><path d="M0 0 L10 0 L5.0 7.5 Z" fill="#555"/></svg>
<div class="t" style="top:493.3px;font-size:15px;left:1127.0px;color:#222">mean_acc_x</div>
<div class="a" style="left:1121px;top:521px;width:202.5px;height:27.5px;background:#fff;border:1px solid #8d8d8d;border-radius:0 5px 5px 0"></div>
<div class="a" style="left:1296px;top:522px;width:26.5px;height:25.5px;background:#f5f5f5;border-left:1px solid #8d8d8d;border-radius:0 4px 4px 0"></div>
<svg style="left:1304px;top:531px" width="10" height="7.5" viewBox="0 0 10 7.5"><path d="M0 0 L10 0 L5.0 7.5 Z" fill="#555"/></svg>
<div class="t" style="top:527.8px;font-size:15px;left:1127.0px;color:#222">mean_acc_y</div>
<div class="t" style="top:583.3px;font-size:15px;font-weight:bold;left:1104.5px;color:#1a1a1a">Classes</div>
<div class="a" style="left:1217.5px;top:577.5px;width:105px;height:27.5px;background:#f5f5f5;border:1px solid #d0d0d0;border-radius:6px"></div>
<div class="t" style="top:583.3px;font-size:15px;left:1210.0px;width:120px;text-align:center;color:#b0b0b0">Move to Front</div>
<div class="a" style="left:1105px;top:612px;width:217px;height:207px;background:#fff;border:1px solid #777"></div>
<div class="a" style="left:1106px;top:613px;width:215px;height:32px;background:#f3f3f3"></div>
<div class="a" style="left:1106px;top:644.5px;width:215px;height:1px;background:#8a8a8a"></div>
<div class="a" style="left:1168px;top:613px;width:1px;height:158px;background:#8a8a8a"></div>
<div class="t" style="top:622.3px;font-size:15px;font-weight:bold;left:1109.5px;color:#1a1a1a">Show</div>
<div class="t" style="top:622.3px;font-size:15px;font-weight:bold;left:1173.5px;color:#1a1a1a">Order</div>
<div class="a" style="left:1106px;top:645.5px;width:62px;height:31px;background:#0072bd"></div>
<div class="a" style="left:1169px;top:645.5px;width:152px;height:31px;background:#fff"></div>
<div class="a" style="left:1106px;top:676.0px;width:215px;height:1px;background:#8a8a8a"></div>
<div class="a" style="left:1129px;top:651.0px;width:16px;height:16px;background:#fff;border:1px solid #333"></div>
<svg style="left:1130px;top:652.0px" width="14" height="14" viewBox="0 0 14 14"><path d="M2.2 7.2 L5.3 10.5 L11.8 3.2" fill="none" stroke="#111" stroke-width="1.5"/></svg>
<div class="t" style="top:652.0px;font-size:15px;left:1173.5px;color:#333">1</div>
<div class="a" style="left:1106px;top:676.5px;width:62px;height:31px;background:#d95319"></div>
<div class="a" style="left:1169px;top:676.5px;width:152px;height:31px;background:#f3f3f3"></div>
<div class="a" style="left:1106px;top:707.0px;width:215px;height:1px;background:#8a8a8a"></div>
<div class="a" style="left:1129px;top:682.0px;width:16px;height:16px;background:#fff;border:1px solid #333"></div>
<svg style="left:1130px;top:683.0px" width="14" height="14" viewBox="0 0 14 14"><path d="M2.2 7.2 L5.3 10.5 L11.8 3.2" fill="none" stroke="#111" stroke-width="1.5"/></svg>
<div class="t" style="top:683.0px;font-size:15px;left:1173.5px;color:#333">2</div>
<div class="a" style="left:1106px;top:707.5px;width:62px;height:31px;background:#edb120"></div>
<div class="a" style="left:1169px;top:707.5px;width:152px;height:31px;background:#fff"></div>
<div class="a" style="left:1106px;top:738.0px;width:215px;height:1px;background:#8a8a8a"></div>
<div class="a" style="left:1129px;top:713.0px;width:16px;height:16px;background:#fff;border:1px solid #333"></div>
<svg style="left:1130px;top:714.0px" width="14" height="14" viewBox="0 0 14 14"><path d="M2.2 7.2 L5.3 10.5 L11.8 3.2" fill="none" stroke="#111" stroke-width="1.5"/></svg>
<div class="t" style="top:714.0px;font-size:15px;left:1173.5px;color:#333">3</div>
<div class="a" style="left:1106px;top:739px;width:62px;height:31px;background:#7e2f8e"></div>
<div class="a" style="left:1169px;top:739px;width:152px;height:31px;background:#f3f3f3"></div>
<div class="a" style="left:1106px;top:769.5px;width:215px;height:1px;background:#8a8a8a"></div>
<div class="a" style="left:1129px;top:744.5px;width:16px;height:16px;background:#fff;border:1px solid #333"></div>
<svg style="left:1130px;top:745.5px" width="14" height="14" viewBox="0 0 14 14"><path d="M2.2 7.2 L5.3 10.5 L11.8 3.2" fill="none" stroke="#111" stroke-width="1.5"/></svg>
<div class="t" style="top:745.5px;font-size:15px;left:1173.5px;color:#333">4</div>
<div class="t" style="top:850.3px;font-size:15px;font-weight:bold;left:1102.0px;color:#0a6fcc;text-decoration:underline">How to investigate features</div>
<svg style="left:0;top:0" width="1344" height="913" viewBox="0 0 1344 913"><rect x="440" y="295.8" width="576.7" height="513.2" fill="#fff"/><path d="M522.4 295.8V809M604.8 295.8V809M687.2 295.8V809M769.5 295.8V809M851.9 295.8V809M934.3 295.8V809M440 347.1H1016.7M440 398.4H1016.7M440 449.8H1016.7M440 501.1H1016.7M440 552.4H1016.7M440 603.7H1016.7M440 655.0H1016.7M440 706.4H1016.7M440 757.7H1016.7" stroke="#dcdcdc" stroke-width="1" fill="none"/><clipPath id="ax"><rect x="440" y="295.8" width="576.7" height="513.2"/></clipPath><g clip-path="url(#ax)"><circle cx="697.3" cy="382.3" r="4.8" fill="#7e2f8e"/><circle cx="710.3" cy="392.9" r="4.8" fill="#7e2f8e"/><circle cx="716.9" cy="429.3" r="4.8" fill="#7e2f8e"/><circle cx="699.3" cy="454.4" r="4.8" fill="#7e2f8e"/><circle cx="609.3" cy="473.3" r="4.8" fill="#7e2f8e"/><circle cx="667.5" cy="471.3" r="4.8" fill="#7e2f8e"/><circle cx="670.4" cy="485.4" r="4.8" fill="#7e2f8e"/><circle cx="682.3" cy="491.2" r="4.8" fill="#7e2f8e"/><circle cx="805.4" cy="327.4" r="4.8" fill="#7e2f8e"/><circle cx="881.0" cy="355.5" r="4.8" fill="#7e2f8e"/><circle cx="725.4" cy="391.4" r="4.8" fill="#7e2f8e"/><circle cx="744.4" cy="394.3" r="4.8" fill="#7e2f8e"/><circle cx="812.5" cy="397.5" r="4.8" fill="#7e2f8e"/><circle cx="831.4" cy="395.3" r="4.8" fill="#7e2f8e"/><circle cx="833.5" cy="409.4" r="4.8" fill="#7e2f8e"/><circle cx="787.5" cy="416.4" r="4.8" fill="#7e2f8e"/><circle cx="777.5" cy="429.5" r="4.8" fill="#7e2f8e"/><circle cx="723.4" cy="421.3" r="4.8" fill="#7e2f8e"/><circle cx="822.5" cy="443.3" r="4.8" fill="#7e2f8e"/><circle cx="847.5" cy="438.4" r="4.8" fill="#7e2f8e"/><circle cx="868.5" cy="450.2" r="4.8" fill="#7e2f8e"/><circle cx="970.4" cy="417.4" r="4.8" fill="#7e2f8e"/><circle cx="865.6" cy="458.5" r="4.8" fill="#7e2f8e"/><circle cx="924.3" cy="463.4" r="4.8" fill="#7e2f8e"/><circle cx="932.4" cy="459.3" r="4.8" fill="#7e2f8e"/><circle cx="928.3" cy="470.4" r="4.8" fill="#7e2f8e"/><circle cx="945.3" cy="465.3" r="4.8" fill="#7e2f8e"/><circle cx="576.4" cy="501.5" r="4.8" fill="#7e2f8e"/><circle cx="609.3" cy="504.4" r="4.8" fill="#7e2f8e"/><circle cx="477.4" cy="511.5" r="4.8" fill="#7e2f8e"/><circle cx="623.1" cy="541.3" r="4.8" fill="#7e2f8e"/><circle cx="628.3" cy="538.3" r="4.8" fill="#7e2f8e"/><circle cx="644.4" cy="541.3" r="4.8" fill="#7e2f8e"/><circle cx="509.4" cy="556.5" r="4.8" fill="#7e2f8e"/><circle cx="635.4" cy="568.3" r="4.8" fill="#7e2f8e"/><circle cx="681.3" cy="569.1" r="4.8" fill="#7e2f8e"/><circle cx="645.6" cy="622.4" r="4.8" fill="#7e2f8e"/><circle cx="764.3" cy="456.1" r="4.8" fill="#7e2f8e"/><circle cx="775.3" cy="462.2" r="4.8" fill="#7e2f8e"/><circle cx="786.5" cy="461.4" r="4.8" fill="#7e2f8e"/><circle cx="753.3" cy="469.3" r="4.8" fill="#7e2f8e"/><circle cx="727.5" cy="480.3" r="4.8" fill="#7e2f8e"/><circle cx="750.3" cy="484.4" r="4.8" fill="#7e2f8e"/><circle cx="748.4" cy="502.1" r="4.8" fill="#7e2f8e"/><circle cx="830.4" cy="456.1" r="4.8" fill="#7e2f8e"/><circle cx="821.3" cy="464.3" r="4.8" fill="#7e2f8e"/><circle cx="838.4" cy="466.3" r="4.8" fill="#7e2f8e"/><circle cx="828.4" cy="475.3" r="4.8" fill="#7e2f8e"/><circle cx="850.3" cy="483.4" r="4.8" fill="#7e2f8e"/><circle cx="838.4" cy="499.5" r="4.8" fill="#7e2f8e"/><circle cx="830.4" cy="512.3" r="4.8" fill="#7e2f8e"/><circle cx="786.5" cy="516.3" r="4.8" fill="#7e2f8e"/><circle cx="772.4" cy="524.5" r="4.8" fill="#7e2f8e"/><circle cx="764.3" cy="532.5" r="4.8" fill="#7e2f8e"/><circle cx="801.3" cy="526.3" r="4.8" fill="#7e2f8e"/><circle cx="811.5" cy="524.5" r="4.8" fill="#7e2f8e"/><circle cx="810.3" cy="536.5" r="4.8" fill="#7e2f8e"/><circle cx="741.5" cy="537.3" r="4.8" fill="#7e2f8e"/><circle cx="878.2" cy="536.5" r="4.8" fill="#7e2f8e"/><circle cx="738.2" cy="560.5" r="4.8" fill="#7e2f8e"/><circle cx="741.5" cy="564.6" r="4.8" fill="#7e2f8e"/><circle cx="856.3" cy="567.4" r="4.8" fill="#7e2f8e"/><circle cx="891.4" cy="508.4" r="4.8" fill="#7e2f8e"/><circle cx="916.4" cy="570.5" r="4.8" fill="#7e2f8e"/><circle cx="712.4" cy="597.3" r="4.8" fill="#7e2f8e"/><circle cx="727.4" cy="633.3" r="4.8" fill="#7e2f8e"/><circle cx="731.3" cy="668.3" r="4.8" fill="#7e2f8e"/><circle cx="774.4" cy="664.2" r="4.8" fill="#7e2f8e"/><circle cx="861.6" cy="615.5" r="4.8" fill="#edb120"/><circle cx="865.5" cy="612.2" r="4.8" fill="#edb120"/><circle cx="821.0" cy="686.4" r="4.8" fill="#edb120"/><circle cx="808.3" cy="692.1" r="4.8" fill="#edb120"/><circle cx="802.6" cy="697.0" r="4.8" fill="#edb120"/><circle cx="831.2" cy="692.5" r="4.8" fill="#edb120"/><circle cx="827.5" cy="703.6" r="4.8" fill="#edb120"/><circle cx="835.3" cy="704.4" r="4.8" fill="#edb120"/><circle cx="844.3" cy="700.3" r="4.8" fill="#edb120"/><circle cx="809.9" cy="712.6" r="4.8" fill="#edb120"/><circle cx="817.3" cy="707.6" r="4.8" fill="#edb120"/><circle cx="825.5" cy="720.7" r="4.8" fill="#edb120"/><circle cx="779.2" cy="738.3" r="4.8" fill="#edb120"/><circle cx="793.6" cy="731.4" r="4.8" fill="#edb120"/><circle cx="804.2" cy="747.7" r="4.8" fill="#edb120"/><circle cx="791.9" cy="756.7" r="4.8" fill="#edb120"/><circle cx="801.3" cy="755.9" r="4.8" fill="#edb120"/><circle cx="809.1" cy="756.7" r="4.8" fill="#edb120"/><circle cx="816.5" cy="755.9" r="4.8" fill="#edb120"/><circle cx="800.0" cy="740.0" r="4.8" fill="#edb120"/><circle cx="810.0" cy="745.0" r="4.8" fill="#edb120"/><circle cx="795.0" cy="740.0" r="4.8" fill="#edb120"/><circle cx="802.6" cy="737.0" r="4.8" fill="#edb120"/><circle cx="805.5" cy="756.0" r="4.8" fill="#edb120"/><circle cx="811.0" cy="758.5" r="4.8" fill="#edb120"/><circle cx="889.6" cy="603.1" r="4.8" fill="#d95319"/><circle cx="862.2" cy="621.8" r="4.8" fill="#d95319"/><circle cx="828.5" cy="684.1" r="4.8" fill="#d95319"/><circle cx="850.4" cy="684.3" r="4.8" fill="#d95319"/><circle cx="850.4" cy="699.3" r="4.8" fill="#d95319"/><circle cx="851.5" cy="710.3" r="4.8" fill="#d95319"/><circle cx="819.3" cy="690.1" r="4.8" fill="#d95319"/><circle cx="809.1" cy="694.6" r="4.8" fill="#d95319"/><circle cx="803.4" cy="705.2" r="4.8" fill="#d95319"/><circle cx="820.6" cy="706.0" r="4.8" fill="#d95319"/><circle cx="787.3" cy="709.4" r="4.8" fill="#d95319"/><circle cx="812.0" cy="700.0" r="4.8" fill="#d95319"/><circle cx="783.3" cy="726.0" r="4.8" fill="#d95319"/><circle cx="787.4" cy="728.5" r="4.8" fill="#d95319"/><circle cx="804.6" cy="722.8" r="4.8" fill="#d95319"/><circle cx="798.5" cy="729.7" r="4.8" fill="#d95319"/><circle cx="807.5" cy="729.7" r="4.8" fill="#d95319"/><circle cx="824.7" cy="724.0" r="4.8" fill="#d95319"/><circle cx="827.9" cy="728.5" r="4.8" fill="#d95319"/><circle cx="838.6" cy="728.9" r="4.8" fill="#d95319"/><circle cx="842.7" cy="733.0" r="4.8" fill="#d95319"/><circle cx="836.9" cy="734.6" r="4.8" fill="#d95319"/><circle cx="860.7" cy="735.0" r="4.8" fill="#d95319"/><circle cx="852.5" cy="739.6" r="4.8" fill="#d95319"/><circle cx="843.5" cy="745.3" r="4.8" fill="#d95319"/><circle cx="840.2" cy="748.6" r="4.8" fill="#d95319"/><circle cx="831.2" cy="751.4" r="4.8" fill="#d95319"/><circle cx="789.5" cy="740.4" r="4.8" fill="#d95319"/><circle cx="785.4" cy="750.2" r="4.8" fill="#d95319"/><circle cx="778.4" cy="757.2" r="4.8" fill="#d95319"/><circle cx="796.0" cy="753.5" r="4.8" fill="#d95319"/><circle cx="797.6" cy="745.3" r="4.8" fill="#d95319"/><circle cx="812.4" cy="749.4" r="4.8" fill="#d95319"/><circle cx="821.4" cy="753.5" r="4.8" fill="#d95319"/><circle cx="827.9" cy="740.8" r="4.8" fill="#d95319"/><circle cx="827.1" cy="735.5" r="4.8" fill="#d95319"/><circle cx="805.8" cy="739.6" r="4.8" fill="#d95319"/><circle cx="814.0" cy="735.5" r="4.8" fill="#d95319"/><circle cx="805.4" cy="771.5" r="4.8" fill="#d95319"/><circle cx="815.0" cy="742.0" r="4.8" fill="#d95319"/><circle cx="820.0" cy="738.0" r="4.8" fill="#d95319"/><circle cx="810.0" cy="733.0" r="4.8" fill="#d95319"/><circle cx="800.0" cy="736.0" r="4.8" fill="#d95319"/><circle cx="805.0" cy="745.0" r="4.8" fill="#d95319"/><circle cx="807.5" cy="698.6" r="4.8" fill="#d95319"/><circle cx="812.4" cy="702.7" r="4.8" fill="#d95319"/><circle cx="822.2" cy="702.7" r="4.8" fill="#d95319"/><circle cx="813.2" cy="694.6" r="4.8" fill="#d95319"/><circle cx="805.8" cy="704.4" r="4.8" fill="#d95319"/><circle cx="800.0" cy="725.0" r="4.8" fill="#d95319"/><circle cx="810.0" cy="724.0" r="4.8" fill="#d95319"/><circle cx="818.0" cy="732.0" r="4.8" fill="#d95319"/><circle cx="825.0" cy="745.0" r="4.8" fill="#d95319"/><circle cx="832.0" cy="745.0" r="4.8" fill="#d95319"/><circle cx="795.0" cy="735.0" r="4.8" fill="#d95319"/><circle cx="800.0" cy="748.0" r="4.8" fill="#d95319"/><circle cx="830.0" cy="735.0" r="4.8" fill="#d95319"/><circle cx="835.0" cy="740.0" r="4.8" fill="#d95319"/><circle cx="812.0" cy="741.0" r="4.8" fill="#d95319"/><circle cx="822.0" cy="748.0" r="4.8" fill="#d95319"/><circle cx="883.5" cy="608.4" r="4.8" fill="#0072bd"/><circle cx="864.4" cy="621.2" r="4.8" fill="#0072bd"/><circle cx="817.5" cy="701.3" r="4.8" fill="#0072bd"/><circle cx="818.5" cy="726.5" r="4.8" fill="#0072bd"/><circle cx="819.5" cy="744.9" r="4.8" fill="#0072bd"/></g><path d="M522.4 809v-6M522.4 295.8v6M604.8 809v-6M604.8 295.8v6M687.2 809v-6M687.2 295.8v6M769.5 809v-6M769.5 295.8v6M851.9 809v-6M851.9 295.8v6M934.3 809v-6M934.3 295.8v6M440 347.1h6M1016.7 347.1h-6M440 398.4h6M1016.7 398.4h-6M440 449.8h6M1016.7 449.8h-6M440 501.1h6M1016.7 501.1h-6M440 552.4h6M1016.7 552.4h-6M440 603.7h6M1016.7 603.7h-6M440 655.0h6M1016.7 655.0h-6M440 706.4h6M1016.7 706.4h-6M440 757.7h6M1016.7 757.7h-6" stroke="#262626" stroke-width="1.3" fill="none"/><rect x="440" y="295.8" width="576.7" height="513.2" fill="none" stroke="#262626" stroke-width="1.4"/></svg>
<div class="t" style="top:817.8px;font-size:16px;left:400.0px;width:80px;text-align:center;color:#262626">-0.3</div>
<div class="t" style="top:817.8px;font-size:16px;left:482.4px;width:80px;text-align:center;color:#262626">-0.25</div>
<div class="t" style="top:817.8px;font-size:16px;left:564.8px;width:80px;text-align:center;color:#262626">-0.2</div>
<div class="t" style="top:817.8px;font-size:16px;left:647.2px;width:80px;text-align:center;color:#262626">-0.15</div>
<div class="t" style="top:817.8px;font-size:16px;left:729.5px;width:80px;text-align:center;color:#262626">-0.1</div>
<div class="t" style="top:817.8px;font-size:16px;left:811.9px;width:80px;text-align:center;color:#262626">-0.05</div>
<div class="t" style="top:817.8px;font-size:16px;left:894.3px;width:80px;text-align:center;color:#262626">0</div>
<div class="t" style="top:817.8px;font-size:16px;left:976.7px;width:80px;text-align:center;color:#262626">0.05</div>
<div class="t" style="top:288.5px;font-size:16px;left:352.5px;width:80px;text-align:right;color:#262626">0.2</div>
<div class="t" style="top:339.8px;font-size:16px;left:352.5px;width:80px;text-align:right;color:#262626">0.15</div>
<div class="t" style="top:391.1px;font-size:16px;left:352.5px;width:80px;text-align:right;color:#262626">0.1</div>
<div class="t" style="top:442.4px;font-size:16px;left:352.5px;width:80px;text-align:right;color:#262626">0.05</div>
<div class="t" style="top:493.7px;font-size:16px;left:352.5px;width:80px;text-align:right;color:#262626">0</div>
<div class="t" style="top:545.1px;font-size:16px;left:352.5px;width:80px;text-align:right;color:#262626">-0.05</div>
<div class="t" style="top:596.4px;font-size:16px;left:352.5px;width:80px;text-align:right;color:#262626">-0.1</div>
<div class="t" style="top:647.7px;font-size:16px;left:352.5px;width:80px;text-align:right;color:#262626">-0.15</div>
<div class="t" style="top:699.0px;font-size:16px;left:352.5px;width:80px;text-align:right;color:#262626">-0.2</div>
<div class="t" style="top:750.3px;font-size:16px;left:352.5px;width:80px;text-align:right;color:#262626">-0.25</div>
<div class="t" style="top:801.7px;font-size:16px;left:352.5px;width:80px;text-align:right;color:#262626">-0.3</div>
<div class="t" style="top:838.5px;font-size:18px;left:628.0px;width:200px;text-align:center;color:#262626">mean_acc_x</div>
<div class="t" style="left:279.8px;top:543.8px;width:200px;height:18px;text-align:center;font-size:18px;color:#262626;transform:rotate(-90deg);transform-origin:100px 9px">mean_acc_y</div>
<div class="t" style="top:274.0px;font-size:18.3px;font-weight:bold;left:527.9px;width:400px;text-align:center;color:#1f1f1f">Original data set: trainingData</div>
<div class="a" style="left:338px;top:885px;width:1005px;height:27px;background:#e6e6e6;border-radius:0 0 8px 0"></div>
<div class="a" style="left:338px;top:884.5px;width:1005px;height:1.3px;background:#7a7a7a"></div>
<div class="t" style="top:891.0px;font-size:15px;left:347.9px;color:#333">Data set: trainingData</div>
<div class="t" style="top:891.0px;font-size:15px;left:516.4px;color:#333">Observations: 283</div>
<div class="t" style="top:891.0px;font-size:15px;left:660.8px;color:#333">Size: 85 kB</div>
<div class="t" style="top:891.0px;font-size:15px;left:760.1px;color:#333">Predictors: 33</div>
<div class="t" style="top:891.0px;font-size:15px;left:876.7px;color:#333">Response: mode</div>
<div class="t" style="top:891.0px;font-size:15px;left:1013.3px;color:#333">Response Classes: 4</div>
<div class="t" style="top:891.0px;font-size:15px;left:1211.6px;color:#333">Validation: Holdout v</div>
<div class="a" style="left:1343px;top:2px;width:1px;height:911px;background:#b9b9b9"></div>
</body></html>
